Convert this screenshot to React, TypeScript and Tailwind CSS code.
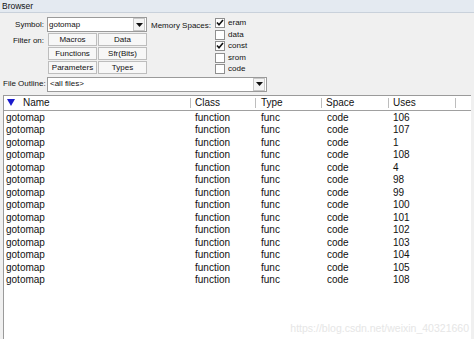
import React from "react";

const rows = ["106", "107", "1", "108", "4", "98", "99", "100", "101", "102", "103", "104", "105", "108"];

const spaces = [
  { label: "eram", checked: true },
  { label: "data", checked: false },
  { label: "const", checked: true },
  { label: "srom", checked: false },
  { label: "code", checked: false },
];

function Arrow() {
  return (
    <div className="flex h-[13px] w-[12px] items-center justify-center border border-[#c8c8c8] bg-[#f4f4f4]">
      <svg width="7" height="4" viewBox="0 0 7 4">
        <path d="M0 0h7L3.5 4z" fill="#111" />
      </svg>
    </div>
  );
}

function Check({ checked }: { checked: boolean }) {
  return (
    <div className="flex h-[10px] w-[10px] items-center justify-center border border-[#8f8f8f] bg-white">
      {checked && (
        <svg width="8" height="8" viewBox="0 0 8 8">
          <path d="M1 3.5l2 2.2L7 1" stroke="#111" strokeWidth="1.6" fill="none" />
        </svg>
      )}
    </div>
  );
}

function FilterButton({ label }: { label: string }) {
  return (
    <div className="flex h-[13px] items-center justify-center border border-[#bdbdbd] bg-[#f7f7f7] text-[8px] leading-none text-[#111]">
      {label}
    </div>
  );
}

export default function App() {
  return (
    <div
      className="flex h-[339px] w-[474px] flex-col overflow-hidden bg-[#f0f0f0] text-[#111]"
      style={{ fontFamily: "'Liberation Sans', Arial, sans-serif" }}
    >
      {/* Title */}
      <div className="h-[13px] border-b border-[#c9d1db] bg-[#e4eaf1] pl-[2px] text-[8.5px] leading-[12px]">
        Browser
      </div>

      {/* Controls */}
      <div className="flex pt-[4px]">
        <div className="flex flex-col">
          <div className="flex h-[15px] items-center">
            <span className="w-[45px] pr-[1px] text-right text-[8px]">Symbol:</span>
            <div className="ml-[2px] flex h-[15px] w-[100px] items-center justify-between border border-[#9a9a9a] bg-white pl-[1px] pr-[1px] text-[8px]">
              <span>gotomap</span>
              <Arrow />
            </div>
          </div>
          <div className="mt-[1px] flex">
            <span className="w-[45px] pr-[1px] pt-[2px] text-right text-[8px]">Filter on:</span>
            <div className="ml-[3px] grid w-[99px] grid-cols-2 gap-[1px]">
              <FilterButton label="Macros" />
              <FilterButton label="Data" />
              <FilterButton label="Functions" />
              <FilterButton label="Sfr(Bits)" />
              <FilterButton label="Parameters" />
              <FilterButton label="Types" />
            </div>
          </div>
        </div>
        <div className="ml-[4px] flex">
          <span className="pt-[3px] text-[8px]">Memory Spaces:</span>
          <div className="ml-[4px] flex flex-col gap-[1px] pt-[1px]">
            {spaces.map((s) => (
              <div key={s.label} className="flex h-[10.5px] items-center gap-[3px] text-[8px]">
                <Check checked={s.checked} />
                <span>{s.label}</span>
              </div>
            ))}
          </div>
        </div>
      </div>

      <div className="mt-[2px] flex h-[15px] items-center">
        <span className="w-[45px] pl-[3px] text-[8px] whitespace-nowrap">File Outline:</span>
        <div className="ml-[2px] flex h-[15px] w-[220px] items-center justify-between border border-[#9a9a9a] bg-white pl-[2px] pr-[1px] text-[8px]">
          <span>&lt;all files&gt;</span>
          <Arrow />
        </div>
      </div>

      {/* Table */}
      <div className="ml-[3px] mr-[3px] mt-[3px] flex-1 border-l border-t border-[#9a9a9a] bg-white text-[10px]">
        <div className="flex h-[15px] items-center border-b border-[#a0a0a0] leading-none">
          <div className="flex w-[187px] items-center border-r border-[#bdbdbd]">
            <svg className="ml-[3px]" width="8" height="7" viewBox="0 0 8 7">
              <path d="M0 0h8L4 7z" fill="#1a1acc" />
            </svg>
            <span className="ml-[8px]">Name</span>
          </div>
          <div className="w-[65px] border-r border-[#bdbdbd] pl-[4px]">Class</div>
          <div className="w-[66px] border-r border-[#bdbdbd] pl-[5px]">Type</div>
          <div className="w-[67px] border-r border-[#bdbdbd] pl-[4px]">Space</div>
          <div className="w-[67px] border-r border-[#bdbdbd] pl-[4px]">Uses</div>
        </div>
        <div className="pt-[1px]">
          {rows.map((u, i) => (
            <div key={i} className="flex h-[12.5px] items-center leading-none">
              <div className="w-[188px] pl-[2px]">gotomap</div>
              <div className="w-[65px] pl-[3px]">function</div>
              <div className="w-[66px] pl-[4px]">func</div>
              <div className="w-[67px] pl-[4px]">code</div>
              <div className="w-[67px] pl-[3px]">{u}</div>
            </div>
          ))}
        </div>
        <div className="mt-[34px] pr-[2px] text-right text-[10.5px] text-[#e6e6e6]">
          https://blog.csdn.net/weixin_40321660
        </div>
      </div>
    </div>
  );
}
